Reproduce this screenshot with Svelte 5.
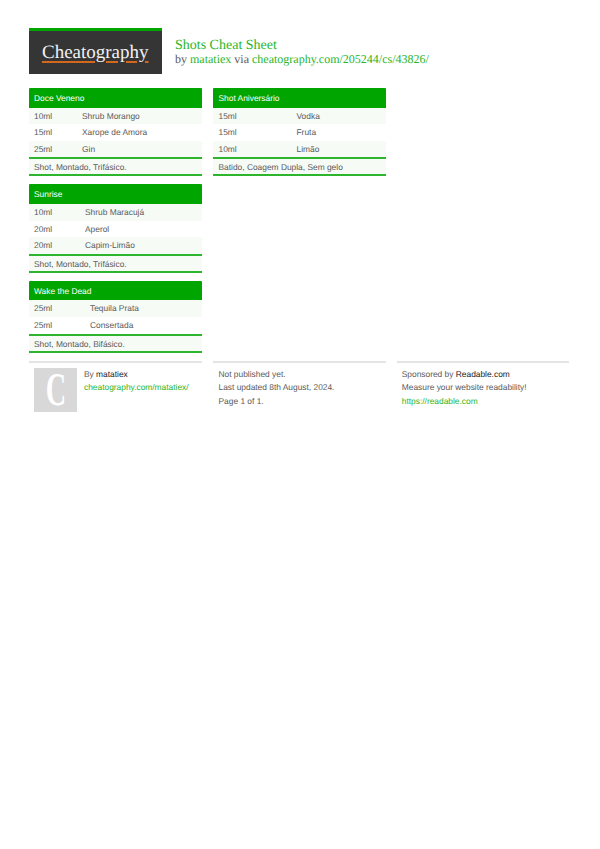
<script>
  const tables = [
    [
      {
        title: "Doce Veneno", col: 48, note: "Shot, Montado, Trifásico.",
        rows: [["10ml", "Shrub Morango"], ["15ml", "Xarope de Amora"], ["25ml", "Gin"]]
      },
      {
        title: "Sunrise", col: 51, note: "Shot, Montado, Trifásico.",
        rows: [["10ml", "Shrub Maracujá"], ["20ml", "Aperol"], ["20ml", "Capim-Limão"]]
      },
      {
        title: "Wake the Dead", col: 56, note: "Shot, Montado, Bifásico.",
        rows: [["25ml", "Tequila Prata"], ["25ml", "Consertada"]]
      }
    ],
    [
      {
        title: "Shot Aniversário", col: 78, note: "Batido, Coagem Dupla, Sem gelo",
        rows: [["15ml", "Vodka"], ["15ml", "Fruta"], ["10ml", "Limão"]]
      }
    ]
  ];
</script>

<div class="page">
  <header class="top">
    <div class="logo"><span>Cheatography</span></div>
    <div class="heading">
      <h1>Shots Cheat Sheet</h1>
      <p>by <em>matatiex</em> via <em>cheatography.com/205244/cs/43826/</em></p>
    </div>
  </header>

  <main class="cols">
    {#each tables as col}
      <div class="col">
        {#each col as t}
          <section class="card">
            <h2>{t.title}</h2>
            {#each t.rows as r}
              <div class="row" style="grid-template-columns: {t.col}px 1fr">
                <span>{r[0]}</span><span>{r[1]}</span>
              </div>
            {/each}
            <div class="note">{t.note}</div>
          </section>
        {/each}
      </div>
    {/each}
  </main>

  <footer class="foot">
    <div class="fcol author">
      <div class="avatar"><span>C</span></div>
      <div class="lines">
        <div>By <b>matatiex</b></div>
        <div class="link">cheatography.com/matatiex/</div>
      </div>
    </div>
    <div class="fcol lines">
      <div>Not published yet.</div>
      <div>Last updated 8th August, 2024.</div>
      <div>Page 1 of 1.</div>
    </div>
    <div class="fcol lines">
      <div>Sponsored by <b>Readable.com</b></div>
      <div>Measure your website readability!</div>
      <div class="link">https://readable.com</div>
    </div>
  </footer>
</div>

<style>
  :global(body) {
    background: #fff;
  }

  .page {
    width: 600px;
    height: 849px;
    box-sizing: border-box;
    padding: 28px 31px 0 28.5px;
    font-family: "Liberation Sans", Arial, sans-serif;
    font-size: 8.4px;
    text-rendering: geometricPrecision;
    color: #5a5a5a;
    overflow: hidden;
  }

  .top {
    display: flex;
    gap: 13px;
    height: 60px;
  }

  .logo {
    width: 133.5px;
    height: 46px;
    box-sizing: border-box;
    border-top: 3px solid #00a500;
    background: #353535;
    color: #f2f2f2;
    font-family: "Liberation Serif", serif;
    font-size: 19px;
    display: flex;
    align-items: center;
    justify-content: center;
  }

  .logo span {
    text-decoration-line: underline;
    text-decoration-color: #d2681e;
    text-decoration-thickness: 1.5px;
    text-underline-offset: 3px;
  }

  .heading {
    padding-top: 10.5px;
    font-family: "Liberation Serif", serif;
  }

  h1 {
    margin: 0;
    font-size: 14px;
    font-weight: normal;
    color: #2ab52a;
    line-height: 13.5px;
  }

  .heading p {
    margin: 0;
    font-size: 12px;
    line-height: 15px;
    color: #5a5a5a;
  }

  .heading em {
    font-style: normal;
    color: #2ab52a;
  }

  .cols {
    display: grid;
    grid-template-columns: 173px 172.5px 172px;
    column-gap: 11.5px;
  }

  .col {
    display: flex;
    flex-direction: column;
    gap: 8px;
  }

  .card {
    border-bottom: 2px solid #2db52d;
  }

  h2 {
    margin: 0;
    height: 19.5px;
    padding-left: 5.5px;
    background: #00a500;
    color: #fff;
    font-size: 8.4px;
    font-weight: normal;
    line-height: 20.5px;
    border-radius: 1px 1px 0 0;
  }

  .row {
    display: grid;
    height: 16.67px;
    line-height: 16.67px;
    padding-left: 5.5px;
  }

  .row:nth-of-type(odd) {
    background: #f6fbf6;
  }

  .note {
    height: 15px;
    line-height: 16px;
    padding-left: 5.5px;
    border-top: 2px solid #2db52d;
    background: #f6fbf6;
  }

  .foot {
    display: grid;
    grid-template-columns: 173px 172.5px 172px;
    column-gap: 11.5px;
    margin-top: 8px;
  }

  .fcol {
    border-top: 2px solid #e4e4e4;
    padding: 5px 0 0 5.5px;
  }

  .fcol:last-child {
    padding-left: 4.75px;
  }

  .author {
    display: flex;
    gap: 7px;
  }

  .avatar {
    flex: none;
    width: 43px;
    height: 44px;
    background: #d8d8d8;
    color: #fff;
    font-family: "Liberation Serif", serif;
    font-size: 47px;
    font-weight: bold;
    line-height: 44px;
    text-align: center;
  }

  .avatar span {
    display: inline-block;
    transform: scaleX(0.6);
  }

  .lines > div {
    line-height: 13.7px;
  }

  .lines b {
    font-weight: normal;
    color: #222;
  }

  .link {
    color: #2ab52a;
  }
</style>
